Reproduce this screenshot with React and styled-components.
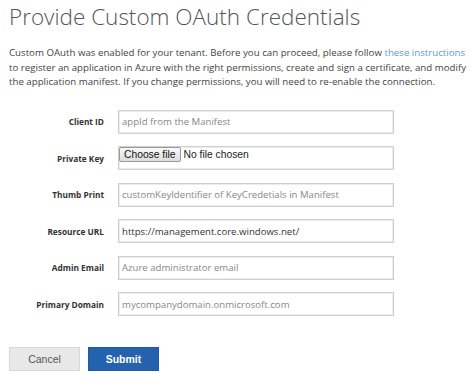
import React from "react";
import styled, { createGlobalStyle } from "styled-components";

const GlobalStyle = createGlobalStyle`
  html, body {
    margin: 0;
    padding: 0;
    background: #fff;
  }
  body {
    font-family: "Open Sans", "Liberation Sans", sans-serif;
  }
`;

const Page = styled.div`
  width: 474px;
  height: 380px;
  box-sizing: border-box;
  padding: 0 9px;
  overflow: hidden;
`;

const Title = styled.h1`
  margin: 0;
  padding-top: 2px;
  font-size: 22.5px;
  font-weight: 300;
  line-height: 30px;
  color: #555;
  white-space: nowrap;
`;

const Intro = styled.p`
  margin: 14px -6px 0 0;
  font-size: 9.7px;
  line-height: 14.5px;
  color: #444;
`;

const Link = styled.a`
  color: #5d9cd8;
  text-decoration: none;
`;

const Form = styled.form`
  margin-top: 20px;
  display: flex;
  flex-direction: column;
  gap: 12.6px;
`;

const Row = styled.div`
  display: grid;
  grid-template-columns: 95px 276px;
  column-gap: 14px;
  align-items: center;
`;

const Label = styled.label`
  text-align: right;
  font-size: 8.3px;
  font-weight: 700;
  color: #333;
  white-space: nowrap;
`;

const Field = styled.div`
  height: 24px;
  box-sizing: border-box;
  border: 1px solid #cfcfcf;
  box-shadow: inset 0 0 0 1px #ececec;
  display: flex;
  align-items: ${(p) => (p.$file ? "flex-start" : "center")};
  padding: ${(p) => (p.$file ? "0" : "0 3px")};
  font-size: 9.6px;
  color: ${(p) => (p.$filled ? "#333" : "#888")};
  white-space: nowrap;
  overflow: hidden;
`;

const FileButton = styled.span`
  font-family: "Liberation Sans", Arial, sans-serif;
  font-size: 10.3px;
  color: #111;
  padding: 0 4px;
  margin-right: 3px;
  border: 1px solid #999;
  border-radius: 2px;
  background: linear-gradient(#fafafa, #dcdcdc);
  line-height: 13px;
`;

const FileText = styled.span`
  font-family: "Liberation Sans", Arial, sans-serif;
  font-size: 10.3px;
  color: #222;
  line-height: 15px;
`;

const Actions = styled.div`
  margin-top: 31px;
  display: flex;
  gap: 8px;
`;

const Button = styled.button`
  width: 71px;
  height: 24px;
  box-sizing: border-box;
  font-family: "Liberation Sans", Arial, sans-serif;
  font-size: 10.5px;
  border: 1px solid ${(p) => (p.$primary ? "#1f5aa6" : "#d8d8d8")};
  background: ${(p) => (p.$primary ? "#2562ad" : "#e8e8e8")};
  color: ${(p) => (p.$primary ? "#fff" : "#555")};
  font-weight: ${(p) => (p.$primary ? 700 : 400)};
  padding: 0;
`;

const fields = [
  { label: "Client ID", value: "appId from the Manifest" },
  { label: "Private Key", file: true },
  { label: "Thumb Print", value: "customKeyIdentifier of KeyCredetials in Manifest" },
  { label: "Resource URL", value: "https://management.core.windows.net/", filled: true },
  { label: "Admin Email", value: "Azure administrator email" },
  { label: "Primary Domain", value: "mycompanydomain.onmicrosoft.com" },
];

export default function App() {
  return (
    <Page>
      <GlobalStyle />
      <Title>Provide Custom OAuth Credentials</Title>
      <Intro>
        Custom OAuth was enabled for your tenant. Before you can proceed, please follow{" "}
        <Link href="#">these instructions</Link> to register an application in Azure with the
        right permissions, create and sign a certificate, and modify the application manifest. If
        you change permissions, you will need to re-enable the connection.
      </Intro>
      <Form>
        {fields.map((f) => (
          <Row key={f.label}>
            <Label>{f.label}</Label>
            {f.file ? (
              <Field $filled $file>
                <FileButton>Choose file</FileButton>
                <FileText>No file chosen</FileText>
              </Field>
            ) : (
              <Field $filled={f.filled}>{f.value}</Field>
            )}
          </Row>
        ))}
      </Form>
      <Actions>
        <Button type="button">Cancel</Button>
        <Button type="button" $primary>
          Submit
        </Button>
      </Actions>
    </Page>
  );
}
